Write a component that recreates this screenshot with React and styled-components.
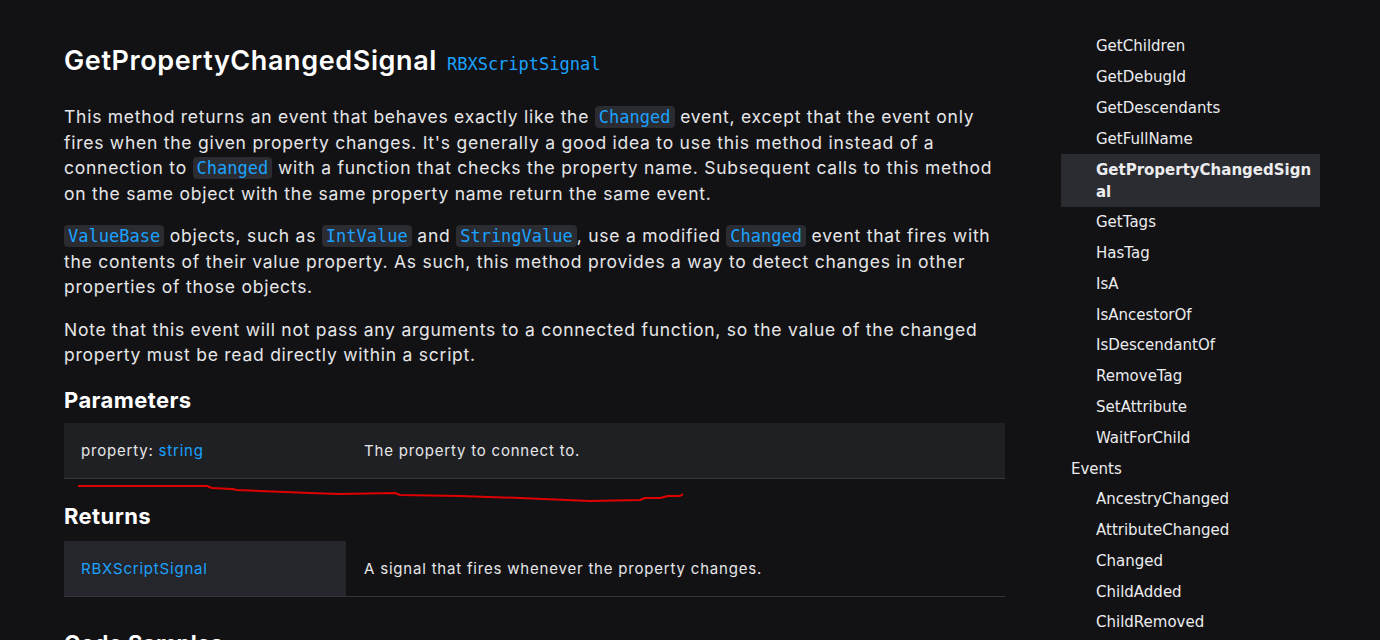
import React from 'react';
import styled, { createGlobalStyle } from 'styled-components';

const GlobalStyle = createGlobalStyle`
  html, body {
    margin: 0;
    padding: 0;
    background: #121215;
    overflow: hidden;
  }
  body {
    font-family: Inter, 'Noto Sans', sans-serif;
    color: #e6e6e8;
  }
`;

const sidebarItems = [
  'GetChildren',
  'GetDebugId',
  'GetDescendants',
  'GetFullName',
  { name: 'GetPropertyChangedSignal', active: true },
  'GetTags',
  'HasTag',
  'IsA',
  'IsAncestorOf',
  'IsDescendantOf',
  'RemoveTag',
  'SetAttribute',
  'WaitForChild',
  { name: 'Events', group: true },
  'AncestryChanged',
  'AttributeChanged',
  'Changed',
  'ChildAdded',
  'ChildRemoved',
];

const App = () => {
  return (
    <>
      <GlobalStyle />
      <Page>
        <Main>
          <TitleRow>
            <Title>GetPropertyChangedSignal</Title>
            <TypeTag>RBXScriptSignal</TypeTag>
          </TitleRow>

          <Para>
            This method returns an event that behaves exactly like the <Code>Changed</Code> event, except that the
            event only fires when the given property changes. It's generally a good idea to use this method instead
            of a connection to <Code>Changed</Code> with a function that checks the property name. Subsequent calls
            to this method on the same object with the same property name return the same event.
          </Para>
          <Para>
            <Code>ValueBase</Code> objects, such as <Code>IntValue</Code> and <Code>StringValue</Code>, use a
            modified <Code>Changed</Code> event that fires with the contents of their value property. As such, this
            method provides a way to detect changes in other properties of those objects.
          </Para>
          <Para>
            Note that this event will not pass any arguments to a connected function, so the value of the changed
            property must be read directly within a script.
          </Para>

          <SectionTitle>Parameters</SectionTitle>
          <Table>
            <Row $filled>
              <NameCell>
                property: <TypeLink>string</TypeLink>
              </NameCell>
              <DescCell>The property to connect to.</DescCell>
            </Row>
          </Table>

          <ReturnsBlock>
            <Scribble viewBox="0 0 620 20" width="620" height="20">
              <path
                d="M14 3 L143 3 L148 5 L168 6 L173 7 L246 10 L276 11 L331 10 L336 12 L396 13 L456 15 L526 18 L576 17 L581 15 L596 15 L604 13 L616 13 L619 11"
                fill="none"
                stroke="#e00000"
                strokeWidth="2"
                strokeLinejoin="round"
              />
            </Scribble>
            <SectionTitle>Returns</SectionTitle>
            <Table>
              <Row>
                <NameCell $shaded>
                  <TypeLink>RBXScriptSignal</TypeLink>
                </NameCell>
                <DescCell>A signal that fires whenever the property changes.</DescCell>
              </Row>
            </Table>
          </ReturnsBlock>

          <SectionTitle $spaced>Code Samples</SectionTitle>
        </Main>

        <Sidebar>
          {sidebarItems.map((item) => {
            const entry = typeof item === 'string' ? { name: item } : item;
            return (
              <NavItem key={entry.name} $active={entry.active} $group={entry.group}>
                {entry.name}
              </NavItem>
            );
          })}
        </Sidebar>
      </Page>
    </>
  );
};

const Page = styled.div`
  display: flex;
  align-items: flex-start;
  padding-left: 64px;
  height: 640px;
`;

const Main = styled.main`
  width: 941px;
  padding-top: 43px;
  flex-shrink: 0;
`;

const TitleRow = styled.div`
  display: flex;
  align-items: baseline;
  gap: 10px;
  margin-bottom: 25px;
`;

const Title = styled.h1`
  margin: 0;
  font-size: 27px;
  line-height: 36px;
  font-weight: 600;
  color: #ffffff;
  letter-spacing: 0.6px;
`;

const TypeTag = styled.span`
  font-family: 'DejaVu Sans Mono', 'Liberation Mono', monospace;
  font-size: 17px;
  letter-spacing: 0;
  color: #1ba2ff;
`;

const Para = styled.p`
  margin: 0 0 17px;
  font-size: 17.5px;
  line-height: 25.5px;
  letter-spacing: 0.75px;
  color: #e6e6e8;
`;

const Code = styled.code`
  font-family: 'DejaVu Sans Mono', 'Liberation Mono', monospace;
  font-size: 17px;
  line-height: 1;
  letter-spacing: 0;
  color: #1ba2ff;
  background: #2a2c31;
  border-radius: 4px;
  padding: 1px 4px;
`;

const SectionTitle = styled.h2`
  margin: ${(p) => (p.$spaced ? '31px 0 0' : '13px 0 8px')};
  font-size: 22px;
  line-height: 30px;
  font-weight: 700;
  letter-spacing: 0.4px;
  color: #ffffff;
`;

const Table = styled.div`
  width: 100%;
`;

const Row = styled.div`
  display: grid;
  grid-template-columns: 282px 1fr;
  min-height: 55px;
  background: ${(p) => (p.$filled ? '#1f2024' : 'transparent')};
  border-bottom: 1px solid #35363b;
`;

const NameCell = styled.div`
  display: flex;
  align-items: center;
  padding: 0 17px;
  font-size: 15px;
  letter-spacing: 0.8px;
  color: #e6e6e8;
  background: ${(p) => (p.$shaded ? '#25262b' : 'transparent')};
  white-space: pre;
`;

const DescCell = styled.div`
  display: flex;
  align-items: center;
  padding: 0 18px;
  font-size: 15px;
  letter-spacing: 0.8px;
  color: #e6e6e8;
`;

const TypeLink = styled.span`
  color: #1ba2ff;
`;

const ReturnsBlock = styled.div`
  position: relative;
  padding-top: 22px;

  h2 {
    margin-top: 0;
    margin-bottom: 10px;
  }
`;

const Scribble = styled.svg`
  position: absolute;
  left: 0;
  top: 4px;
  pointer-events: none;
`;

const Sidebar = styled.nav`
  width: 259px;
  margin-left: 56px;
  padding-top: 31px;
  flex-shrink: 0;
`;

const NavItem = styled.div`
  padding: ${(p) => (p.$group ? '4.4px 8px 4.4px 10px' : '4.4px 6px 4.4px 35px')};
  font-family: 'DejaVu Sans', sans-serif;
  font-size: 15px;
  line-height: 22px;
  color: #ececee;
  font-weight: ${(p) => (p.$active ? 700 : 400)};
  background: ${(p) => (p.$active ? '#2b2c31' : 'transparent')};
  word-break: break-all;
`;

export default App;
